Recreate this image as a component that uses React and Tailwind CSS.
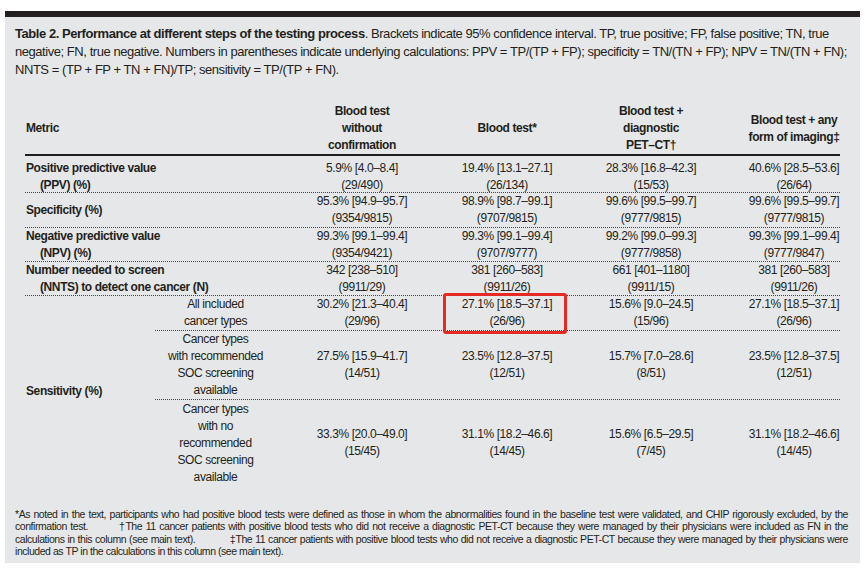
import React from "react";

const rows = [
  {
    label: ["Positive predictive value", "(PPV) (%)"],
    h: "h-[37px] pt-[4px]",
    vals: [
      ["5.9% [4.0–8.4]", "(29/490)"],
      ["19.4% [13.1–27.1]", "(26/134)"],
      ["28.3% [16.8–42.3]", "(15/53)"],
      ["40.6% [28.5–53.6]", "(26/64)"],
    ],
  },
  {
    label: ["Specificity (%)"],
    h: "h-[35px]",
    vals: [
      ["95.3% [94.9–95.7]", "(9354/9815)"],
      ["98.9% [98.7–99.1]", "(9707/9815)"],
      ["99.6% [99.5–99.7]", "(9777/9815)"],
      ["99.6% [99.5–99.7]", "(9777/9815)"],
    ],
  },
  {
    label: ["Negative predictive value", "(NPV) (%)"],
    h: "h-[34px]",
    vals: [
      ["99.3% [99.1–99.4]", "(9354/9421)"],
      ["99.3% [99.1–99.4]", "(9707/9777)"],
      ["99.2% [99.0–99.3]", "(9777/9858)"],
      ["99.3% [99.1–99.4]", "(9777/9847)"],
    ],
  },
  {
    label: ["Number needed to screen", "(NNTS) to detect one cancer (N)"],
    h: "h-[34px]",
    vals: [
      ["342 [238–510]", "(9911/29)"],
      ["381 [260–583]", "(9911/26)"],
      ["661 [401–1180]", "(9911/15)"],
      ["381 [260–583]", "(9911/26)"],
    ],
  },
];

const sensitivity = [
  {
    label: ["All included", "cancer types"],
    h: "h-[35px] border-b",
    vals: [
      ["30.2% [21.3–40.4]", "(29/96)"],
      ["27.1% [18.5–37.1]", "(26/96)"],
      ["15.6% [9.0–24.5]", "(15/96)"],
      ["27.1% [18.5–37.1]", "(26/96)"],
    ],
  },
  {
    label: ["Cancer types", "with recommended", "SOC screening", "available"],
    h: "h-[69px] border-b",
    vals: [
      ["27.5% [15.9–41.7]", "(14/51)"],
      ["23.5% [12.8–37.5]", "(12/51)"],
      ["15.7% [7.0–28.6]", "(8/51)"],
      ["23.5% [12.8–37.5]", "(12/51)"],
    ],
  },
  {
    label: ["Cancer types", "with no", "recommended", "SOC screening", "available"],
    h: "h-[86px]",
    vals: [
      ["33.3% [20.0–49.0]", "(15/45)"],
      ["31.1% [18.2–46.6]", "(14/45)"],
      ["15.6% [6.5–29.5]", "(7/45)"],
      ["31.1% [18.2–46.6]", "(14/45)"],
    ],
  },
];

const headers = [
  ["Blood test", "without", "confirmation"],
  ["Blood test*"],
  ["Blood test +", "diagnostic", "PET–CT†"],
  ["Blood test + any", "form of imaging‡"],
];

const cellPad = ["", "", "", "pl-[26px]"];

const Values = ({ vals, highlight }) =>
  vals.map((v, i) => (
    <div key={i} className={`relative flex flex-col items-center justify-center h-full ${cellPad[i]}`}>
      {v.map((line) => (
        <div key={line} className="whitespace-nowrap">{line}</div>
      ))}
      {highlight && i === 1 && (
        <div className="absolute left-[9px] right-[13px] -top-[3px] -bottom-[4px] border-[3px] border-[#e42a22] rounded-[3px]" />
      )}
    </div>
  ));

const App = () => {
  return (
    <div className="w-[865px] h-[570px] bg-white pt-[11px] px-[5px] text-[#231f20] font-['Liberation_Sans',Arial,sans-serif]">
      <div className="h-[6px] bg-[#231f20]" />
      <div className="h-[546px] bg-[#e6e7e8] pl-[10px] pr-[12px] pt-[8px]">
        {/* caption */}
        <div className="text-[13px] leading-[18px] tracking-[-0.45px] whitespace-nowrap">
          <div>
            <span className="font-bold">Table 2. Performance at different steps of the testing process</span>
            . Brackets indicate 95% confidence interval. TP, true positive; FP, false positive; TN, true
          </div>
          <div>
            negative; FN, true negative. Numbers in parentheses indicate underlying calculations: PPV = TP/(TP + FP); specificity = TN/(TN + FP); NPV = TN/(TN + FN);
          </div>
          <div>NNTS = (TP + FP + TN + FN)/TP; sensitivity = TP/(TP + FN).</div>
        </div>

        {/* table */}
        <div className="ml-[10px] w-[815px] mt-[24px] text-[12px] leading-[17px] tracking-[-0.4px]">
          <div className="grid grid-cols-[265px_144px_146px_142px_118px] h-[53px] items-center font-bold border-b-2 border-[#231f20]">
            <div className="pl-px">Metric</div>
            {headers.map((h, i) => (
              <div key={i} className={`flex flex-col items-center ${cellPad[i]}`}>
                {h.map((line) => (
                  <div key={line} className="whitespace-nowrap">{line}</div>
                ))}
              </div>
            ))}
          </div>

          {rows.map((r) => (
            <div
              key={r.label[0]}
              className={`grid grid-cols-[265px_144px_146px_142px_118px] items-center border-b border-dotted border-[#444] ${r.h}`}
            >
              <div className="pl-px font-bold flex flex-col justify-center h-full">
                <div className="whitespace-nowrap">{r.label[0]}</div>
                {r.label[1] && <div className="pl-[14px] whitespace-nowrap">{r.label[1]}</div>}
              </div>
              <Values vals={r.vals} />
            </div>
          ))}

          <div className="flex">
            <div className="w-[130px] pl-px font-bold flex items-center">Sensitivity (%)</div>
            <div className="flex-1">
              {sensitivity.map((r, idx) => (
                <div
                  key={r.label.join(" ")}
                  className={`grid grid-cols-[135px_144px_146px_142px_118px] items-center border-dotted border-[#444] ${r.h}`}
                >
                  <div className="flex flex-col items-center justify-center h-full pr-[14px]">
                    {r.label.map((line) => (
                      <div key={line} className="whitespace-nowrap">{line}</div>
                    ))}
                  </div>
                  <Values vals={r.vals} highlight={idx === 0} />
                </div>
              ))}
            </div>
          </div>
        </div>

        {/* footnotes */}
        <div className="mt-[22px] text-[10.5px] leading-[12.3px] tracking-[-0.45px] text-justify">
          <div className="[text-align-last:justify] whitespace-nowrap">
            *As noted in the text, participants who had positive blood tests were defined as those in whom the abnormalities found in the baseline test were validated, and CHIP rigorously excluded, by the
          </div>
          <div className="[text-align-last:justify] whitespace-nowrap">
            confirmation test.<span className="inline-block w-[30px]" />†The 11 cancer patients with positive blood tests who did not receive a diagnostic PET-CT because they were managed by their physicians were included as FN in the
          </div>
          <div className="[text-align-last:justify] whitespace-nowrap">
            calculations in this column (see main text).<span className="inline-block w-[34px]" />‡The 11 cancer patients with positive blood tests who did not receive a diagnostic PET-CT because they were managed by their physicians were
          </div>
          <div className="whitespace-nowrap">included as TP in the calculations in this column (see main text).</div>
        </div>
      </div>
    </div>
  );
};

export default App;
